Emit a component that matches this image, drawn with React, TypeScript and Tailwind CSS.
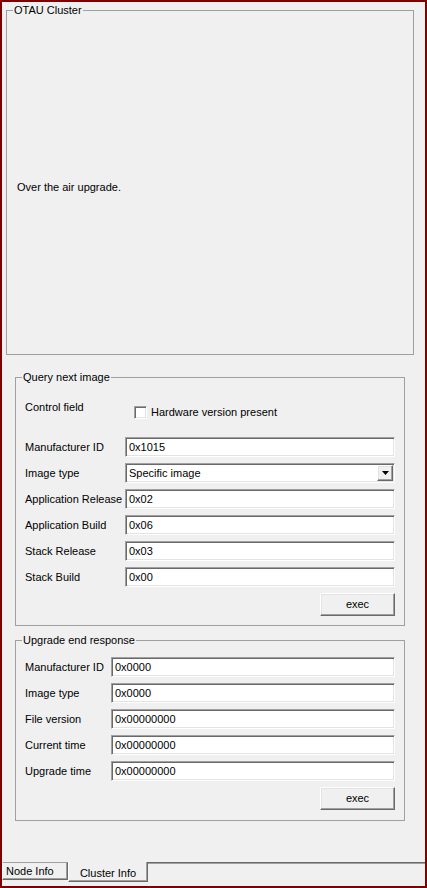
import React from "react";

const sunken =
  "border border-t-[#a0a0a0] border-l-[#a0a0a0] border-b-white border-r-white shadow-[inset_1px_1px_0_#696969,inset_-1px_-1px_0_#e3e3e3] bg-white";
const raised =
  "border border-t-white border-l-white border-b-[#696969] border-r-[#696969] shadow-[inset_-1px_-1px_0_#a0a0a0,inset_1px_1px_0_#e3e3e3] bg-[#f0f0f0]";

const queryRows = [
  { label: "Application Release", value: "0x02" },
  { label: "Application Build", value: "0x06" },
  { label: "Stack Release", value: "0x03" },
  { label: "Stack Build", value: "0x00" },
];

const endRows = [
  { label: "Manufacturer ID", value: "0x0000" },
  { label: "Image type", value: "0x0000" },
  { label: "File version", value: "0x00000000" },
  { label: "Current time", value: "0x00000000" },
  { label: "Upgrade time", value: "0x00000000" },
];

function Field({ value, width }: { value: string; width: string }) {
  return (
    <div className={`${sunken} ${width} h-[20px] flex items-center px-[3px] whitespace-nowrap`}>
      {value}
    </div>
  );
}

function ExecButton() {
  return (
    <div className="flex justify-end">
      <div className={`${raised} w-[75px] h-[23px] flex items-center justify-center`}>exec</div>
    </div>
  );
}

export default function App() {
  return (
    <div className="w-[427px] h-[888px] border-2 border-[#800000] bg-[#f0f0f0] flex flex-col font-['Liberation_Sans',Arial,sans-serif] text-[11px] leading-[13px] text-black">
      <fieldset className="mt-[2px] ml-[4px] w-[408px] h-[351px] shrink-0 border border-[#a0a0a0]">
        <legend className="ml-[6px] px-[1px]">OTAU Cluster</legend>
        <div className="pl-[10px] pt-[164px]">Over the air upgrade.</div>
      </fieldset>

      <fieldset className="mt-[16px] ml-[13px] w-[390px] shrink-0 border border-[#a0a0a0]">
        <legend className="ml-[6px] px-[1px]">Query next image</legend>
        <div className="px-[9px] pb-[9px] flex flex-col gap-[6px]">
          <div className="h-[47px] flex items-start">
            <span className="w-[109px] mt-[17px]">Control field</span>
            <label className="mt-[22px] flex items-center gap-[4px]">
              <span className={`${sunken} w-[13px] h-[13px]`} />
              <span>Hardware version present</span>
            </label>
          </div>
          <div className="h-[20px] flex items-center">
            <span className="w-[100px]">Manufacturer ID</span>
            <Field value="0x1015" width="w-[270px]" />
          </div>
          <div className="h-[20px] flex items-center">
            <span className="w-[100px]">Image type</span>
            <div className={`${sunken} w-[270px] h-[20px] flex items-center pl-[3px] pr-[1px]`}>
              <span className="flex-1">Specific image</span>
              <div className={`${raised} w-[16px] h-[16px] flex items-center justify-center`}>
                <svg width="7" height="4" viewBox="0 0 7 4">
                  <path d="M0 0h7L3.5 4z" fill="#000" />
                </svg>
              </div>
            </div>
          </div>
          {queryRows.map((r) => (
            <div key={r.label} className="h-[20px] flex items-center">
              <span className="w-[100px] whitespace-nowrap">{r.label}</span>
              <Field value={r.value} width="w-[270px]" />
            </div>
          ))}
          <ExecButton />
        </div>
      </fieldset>

      <fieldset className="mt-[8px] ml-[13px] w-[390px] shrink-0 border border-[#a0a0a0]">
        <legend className="ml-[6px] px-[1px]">Upgrade end response</legend>
        <div className="px-[9px] pt-[10px] pb-[10px] flex flex-col gap-[6px]">
          {endRows.map((r) => (
            <div key={r.label} className="h-[20px] flex items-center">
              <span className="w-[86px] whitespace-nowrap">{r.label}</span>
              <Field value={r.value} width="w-[284px]" />
            </div>
          ))}
          <ExecButton />
        </div>
      </fieldset>

      <div className="flex-1" />

      <div className="h-[24px] shrink-0 flex items-start">
        <div className="w-[66px] h-[18px] border-t border-t-[#a0a0a0] border-l border-l-white border-r border-r-[#696969] border-b border-b-[#696969] shadow-[inset_-1px_-1px_0_#a0a0a0] pl-[3px] pt-[2px]">
          Node Info
        </div>
        <div className="w-[80px] h-[20px] border-l border-l-white border-r border-r-[#696969] border-b border-b-[#696969] shadow-[inset_-1px_-1px_0_#a0a0a0] pt-[5px] flex justify-center">
          Cluster Info
        </div>
        <div className="flex-1 h-[2px] border-t border-t-[#696969] shadow-[inset_0_1px_0_#a0a0a0]" />
      </div>
    </div>
  );
}
